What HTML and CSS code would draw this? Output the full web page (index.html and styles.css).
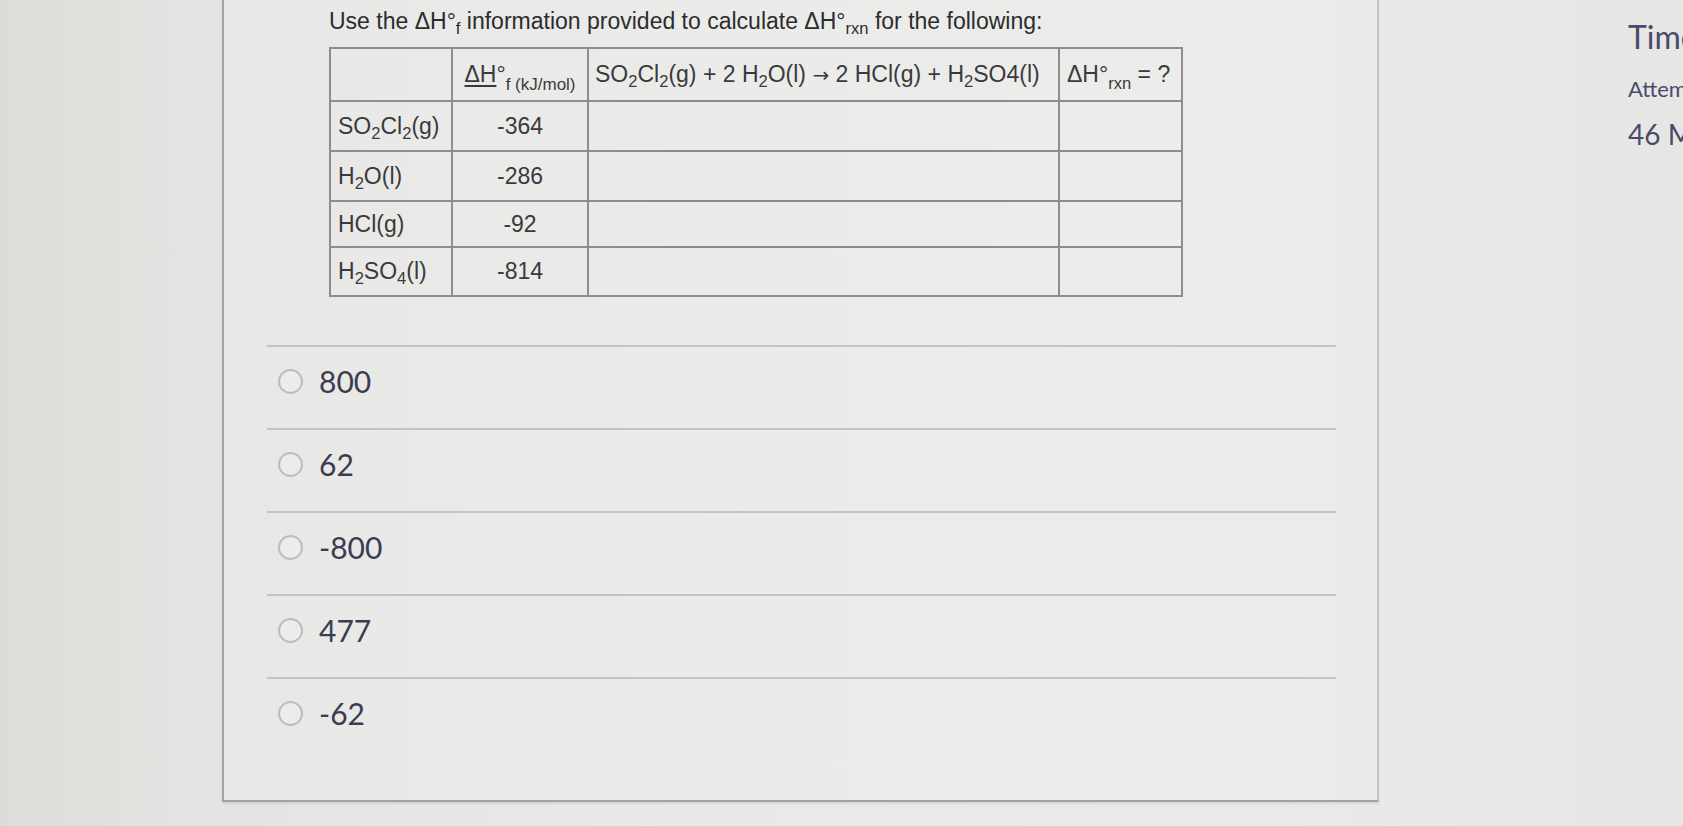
FILE: index.html
```html
<!DOCTYPE html>
<html lang="en">
<head>
<meta charset="utf-8">
<title>Enthalpy question</title>
<link rel="stylesheet" href="styles.css">
</head>
<body>
<div class="page">
  <main class="card">
    <p class="prompt">Use the ΔH°<sub>f</sub> information provided to calculate ΔH°<sub>rxn</sub> for the following:</p>
    <table class="data">
      <colgroup><col class="c1"><col class="c2"><col class="c3"><col class="c4"></colgroup>
      <tr class="r-head">
        <th></th>
        <th class="num"><u>ΔH</u>°<sub class="unit">f (kJ/mol)</sub></th>
        <th>SO<sub>2</sub>Cl<sub>2</sub>(g) + 2 H<sub>2</sub>O(l) <span class="arrow">→</span> 2 HCl(g) + H<sub>2</sub>SO4(l)</th>
        <th>ΔH°<sub class="rxn">rxn</sub> = ?</th>
      </tr>
      <tr class="r-1"><td>SO<sub>2</sub>Cl<sub>2</sub>(g)</td><td class="num">-364</td><td></td><td></td></tr>
      <tr class="r-2"><td>H<sub>2</sub>O(l)</td><td class="num">-286</td><td></td><td></td></tr>
      <tr class="r-3"><td>HCl(g)</td><td class="num">-92</td><td></td><td></td></tr>
      <tr class="r-4"><td>H<sub>2</sub>SO<sub>4</sub>(l)</td><td class="num">-814</td><td></td><td></td></tr>
    </table>
    <ul class="choices">
      <li class="choice"><span class="radio"></span><span class="label">800</span></li>
      <li class="choice"><span class="radio"></span><span class="label">62</span></li>
      <li class="choice"><span class="radio"></span><span class="label">-800</span></li>
      <li class="choice"><span class="radio"></span><span class="label">477</span></li>
      <li class="choice"><span class="radio"></span><span class="label">-62</span></li>
    </ul>
  </main>
  <aside class="side">
    <div class="side-title">Time Limit</div>
    <div class="side-label">Attempt</div>
    <div class="side-value">46 Minutes</div>
  </aside>
</div>
</body>
</html>
```

FILE: styles.css
```css
html, body {
  margin: 0;
  padding: 0;
}

body {
  width: 1683px;
  height: 826px;
  overflow: hidden;
  background: linear-gradient(90deg, #dcddd9 0%, #e4e5e2 12%, #e9eae7 40%, #eaebe8 75%, #e6e7e4 100%);
  font-family: "Liberation Sans", Arial, sans-serif;
  color: #333;
}

.page {
  display: flex;
  align-items: flex-start;
  padding-left: 222px;
}

.card {
  flex: none;
  box-sizing: border-box;
  width: 1157px;
  height: 802px;
  border-left: 2px solid #a4a4ab;
  border-right: 2px solid #c4c4c8;
  border-bottom: 2px solid #a2a2a2;
  box-shadow: 0 2px 2px rgba(0, 0, 0, 0.08);
  background: rgba(255, 255, 255, 0.12);
  padding-left: 105px;
  padding-right: 41px;
}

.prompt {
  margin: 0;
  padding-top: 8px;
  font-size: 23px;
  line-height: 26px;
  color: #2c2c2e;
  white-space: nowrap;
}

sub {
  font-size: 0.72em;
  line-height: 0;
  vertical-align: -0.33em;
}

.data {
  margin-top: 13px;
  border-collapse: collapse;
  table-layout: fixed;
  width: 852px;
  font-size: 23px;
  color: #3a3a3c;
}

.c1 { width: 122px; }
.c2 { width: 136px; }
.c3 { width: 471px; }
.c4 { width: 123px; }

.data th,
.data td {
  border: 2px solid #8d8d8f;
  padding: 0 7px;
  text-align: left;
  font-weight: normal;
  white-space: nowrap;
  vertical-align: middle;
}

.data th:nth-child(3) {
  padding-left: 6px;
  padding-right: 2px;
}

.data .num {
  text-align: center;
  padding: 0 4px;
}

.data u {
  text-decoration-thickness: 2px;
  text-underline-offset: 3px;
}

.arrow {
  font-family: "DejaVu Sans", sans-serif;
  font-size: 20px;
}

.unit {
  font-size: 17px;
  vertical-align: -0.45em;
}

.rxn {
  vertical-align: -0.4em;
}

.r-head { height: 53px; }
.r-1 { height: 50px; }
.r-2 { height: 50px; }
.r-3 { height: 46px; }
.r-4 { height: 49px; }

.choices {
  list-style: none;
  margin: 48px 0 0 -62px;
  padding: 0;
  font-family: Lato, "Open Sans", sans-serif;
}

.choice {
  box-sizing: border-box;
  height: 83px;
  border-top: 2px solid #c2c3c3;
  display: flex;
  align-items: center;
  gap: 16px;
  padding-left: 11px;
  padding-bottom: 13px;
}

.radio {
  flex: none;
  box-sizing: border-box;
  width: 25px;
  height: 25px;
  border: 2px solid #bdbdbd;
  border-radius: 50%;
  background: #ececea;
}

.label {
  font-size: 30px;
  color: #3b3c4f;
}

.side {
  flex: none;
  margin-left: 249px;
  padding-top: 18px;
  font-family: Lato, "Open Sans", sans-serif;
  color: #4a4a6c;
  white-space: nowrap;
}

.side-title {
  font-size: 32px;
  line-height: 38px;
}

.side-label {
  margin-top: 20px;
  font-size: 22px;
  line-height: 26px;
}

.side-value {
  margin-top: 15px;
  font-size: 28px;
  line-height: 34px;
}
```
